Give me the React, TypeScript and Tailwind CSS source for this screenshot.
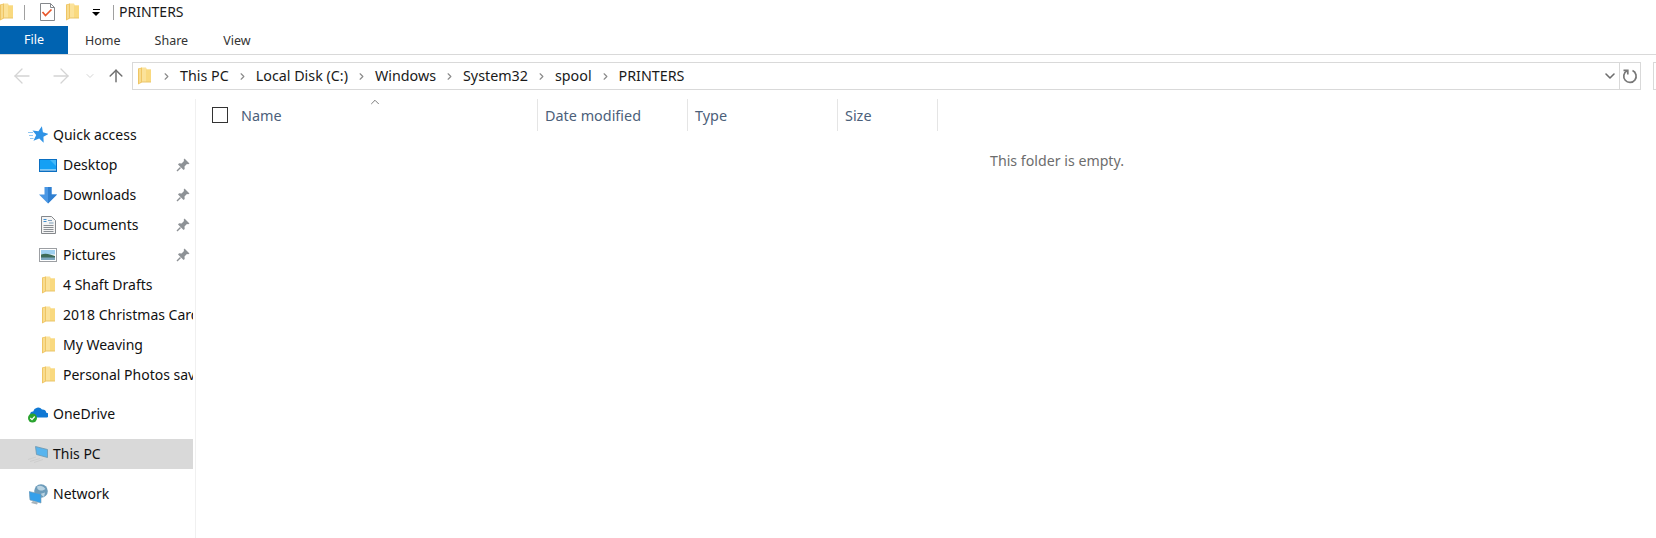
import { ArrowLeft, ArrowRight, ArrowUp, ChevronDown, ChevronRight, ChevronUp } from "lucide-react";
import type { ReactNode } from "react";

function FolderIcon({ className }: { className?: string }) {
  return (
    <svg viewBox="0 0 13 18" className={className}>
      <path d="M3 .5h5l1 2h4V15H3z" fill="#fbe29a" />
      <path d="M8 2.500h5V15H8z" fill="#f9d97f" />
      <path d="M0 1.500 4 .5V15.500L0 17.500z" fill="#efc564" />
      <path d="M1 2l2-.5V15L1 16z" fill="#f8dc8e" />
      <path d="M4 14.500h9V15.500H4z" fill="#e9c46b" />
    </svg>
  );
}

function PinIcon() {
  return (
    <svg viewBox="0 0 14 14" className="h-[14px] w-[14px] shrink-0">
      <path d="M8.500.5 13.500 5.500l-1.300.8-1.300-.3-2.400 2.400.2 2.500-1.100 1.100L2 6.400l1.100-1.100 2.500.2L8 3.100l-.3-1.300z" fill="#8e9296" />
      <path d="M4.500 9.500 1 13" stroke="#8e9296" strokeWidth="1.500" />
    </svg>
  );
}

function StarIcon() {
  return (
    <svg viewBox="0 0 20 18" className="h-[18px] w-[20px]">
      <g transform="rotate(12 12 9)">
        <path d="M12 0l2.300 5.700 6 .4-4.600 3.800 1.500 6-5.200-3.300-5.200 3.300 1.500-6-4.600-3.800 6-.4z" fill="#2f93e6" />
      </g>
      <path d="M0 6.500h5M1 9.500h4M2 12.500h3.500" stroke="#8fc6f1" strokeWidth="1" />
    </svg>
  );
}

function DesktopIcon() {
  return (
    <svg viewBox="0 0 18 13" className="h-[13px] w-[18px]">
      <rect width="18" height="13" fill="#0a6fc2" />
      <path d="M1 1h16v10H1z" fill="#14a0f4" />
      <path d="M11 1h6v6z" fill="#45b8f8" />
      <rect x="1" y="10.500" width="16" height="1" fill="#e2f3fd" />
    </svg>
  );
}

function DownloadIcon() {
  return (
    <svg viewBox="0 0 18 17" className="h-[17px] w-[18px]">
      <path d="M5.500 0h7v7.500H18L9 16.500 0 7.500h5.500z" fill="#4a97e4" />
      <path d="M9 0h3.500v7.500H18L9 16.500z" fill="#2f7fd0" />
    </svg>
  );
}

function DocumentIcon() {
  return (
    <svg viewBox="0 0 15 18" className="h-[18px] w-[15px]">
      <path d="M.5.500h10l4 4v13H.5z" fill="#f4f4f4" stroke="#85888c" />
      <path d="M2.500 3.500h3M2.500 5.500h3" stroke="#3f8fd0" />
      <path d="M7 4.500h4M8 7h4.500" stroke="#7d9fbb" />
      <path d="M2.500 9.500h10M2.500 11.500h10M2.500 13.500h10M2.500 15.500h10" stroke="#8a8f94" />
    </svg>
  );
}

function PicturesIcon() {
  return (
    <svg viewBox="0 0 18 14" className="h-[14px] w-[18px]">
      <rect x=".5" y=".5" width="17" height="13" fill="#fff" stroke="#9c9fa3" />
      <rect x="2" y="2" width="14" height="4.500" fill="#9fd0f0" />
      <path d="M2 6.500c3-1 6-1 9 0l5 1.500v2.500H2z" fill="#3e6b58" />
      <rect x="2" y="9.500" width="14" height="2.500" fill="#7da7bf" />
    </svg>
  );
}

function OneDriveIcon() {
  return (
    <svg viewBox="0 0 20 18" className="h-[18px] w-[20px]">
      <path d="M5 12.500a3 3 0 0 1 .2-6A5 5 0 0 1 14 4.500a4 4 0 0 1 4.300 3.300 2.400 2.400 0 0 1 .7 4.700z" fill="#0f78d4" />
      <circle cx="4.500" cy="13" r="4.500" fill="#2aa32f" />
      <path d="M2.300 13l1.700 1.700 2.700-3.200" stroke="#fff" strokeWidth="1.200" fill="none" />
    </svg>
  );
}

function ThisPcIcon() {
  return (
    <svg viewBox="0 0 20 17" className="h-[17px] w-[20px]">
      <path d="M7.500.5 19.500 3.500V11.500L8.500 8.500z" fill="#58b4ee" stroke="#6f97ad" strokeWidth=".8" />
      <path d="M0 13.500 8 11M2 15.500 12 12.500M6 16.500l9-3" stroke="#cacaca" strokeWidth=".8" fill="none" />
    </svg>
  );
}

function NetworkIcon() {
  return (
    <svg viewBox="0 0 19 21" className="h-[21px] w-[19px]">
      <circle cx="12" cy="7" r="6.800" fill="#6d9cba" />
      <path d="M8 2.500c3-1.500 6-.5 8.500 2.500-2 1.500-5 2.500-8 0zM11 10l5-1.500-1 4.500z" fill="#b9d3e2" />
      <path d="M0 7.500 12 10V19L1 16z" fill="#35a0ea" stroke="#7e9aac" strokeWidth=".6" />
      <path d="M4 17l5 1.500-1 2-6-1.500z" fill="#a9b4bb" />
    </svg>
  );
}

function ChecklistIcon() {
  return (
    <svg viewBox="0 0 15 18" className="h-[18px] w-[15px]">
      <path d="M.5.500h10l4 4v13H.5z" fill="#fff" stroke="#85888c" />
      <path d="M10.500.500v4h4" fill="none" stroke="#85888c" />
      <path d="M2.500 9l3 3.500 6-6" fill="none" stroke="#e8562a" strokeWidth="1.700" />
    </svg>
  );
}

function RefreshIcon() {
  return (
    <svg viewBox="0 0 16 16" className="h-[16px] w-[16px]" fill="none" stroke="#777" strokeWidth="1.700">
      <path d="M10.500 2.600a6.200 6.200 0 1 1-5.500.2" />
      <path d="M1.500 2.300h4.300v4.300" />
    </svg>
  );
}

function NavRow({
  icon,
  label,
  pinned,
  selected,
  indent,
}: {
  icon: ReactNode;
  label: string;
  pinned?: boolean;
  selected?: boolean;
  indent?: boolean;
}) {
  return (
    <div className={`flex h-[30px] w-[193px] items-center overflow-hidden whitespace-nowrap text-[14px] text-[#111] ${selected ? "bg-[#d9d9d9]" : ""}`}>
      <span className={`flex shrink-0 items-center justify-center ${indent ? "ml-[39px] mr-[6px] w-[18px]" : "ml-[28px] mr-[5px] w-[20px]"}`}>
        {icon}
      </span>
      <span className={`pb-[2px] ${pinned ? "flex-1" : ""}`}>{label}</span>
      {pinned && <span className="mr-[3px]"><PinIcon /></span>}
    </div>
  );
}

function Crumb({ label }: { label: string }) {
  return (
    <>
      <ChevronRight size={11} strokeWidth={2.500} className="mx-[8px] shrink-0 text-[#8a8a8a]" />
      <span className="text-[14.3px] text-[#1a1a1a]">{label}</span>
    </>
  );
}

function ColumnHead({ label, width }: { label: string; width: string }) {
  return (
    <div className={`flex h-[32px] items-center border-l border-[#e5e5e5] pl-[7px] pt-[2px] ${width} text-[14.4px] text-[#4c607a]`}>
      {label}
    </div>
  );
}

export default function App() {
  const sidebarFolder = <FolderIcon className="h-[18px] w-[13px]" />;

  return (
    <div className="h-[538px] w-[1656px] overflow-hidden bg-white font-['Noto_Sans',sans-serif]">
      {/* title bar */}
      <div className="mb-[2px] flex h-[24px] items-center text-[14px] text-[#1a1a1a]">
        <FolderIcon className="h-[18px] w-[13px] shrink-0" />
        <div className="ml-[11px] h-[15px] w-px bg-[#a0a0a0]" />
        <span className="ml-[15px]"><ChecklistIcon /></span>
        <FolderIcon className="ml-[11px] h-[18px] w-[13px] shrink-0" />
        <div className="ml-[12px] flex w-[10px] flex-col items-center gap-[2px]">
          <div className="h-px w-[7px] bg-black" />
          <div className="h-0 w-0 border-x-[4px] border-t-[4px] border-x-transparent border-t-black" />
        </div>
        <div className="ml-[12px] h-[15px] w-px bg-[#a0a0a0]" />
        <span className="ml-[5px] pb-[2px]">PRINTERS</span>
      </div>

      {/* ribbon tabs */}
      <div className="flex h-[29px] items-center border-b border-[#d9d9d9] text-[12.5px] text-[#333]">
        <div className="flex h-[28px] w-[68px] items-center justify-center bg-[#0063b1] text-white">File</div>
        <span className="ml-[17px] pt-[2px]">Home</span>
        <span className="ml-[34px] pt-[2px]">Share</span>
        <span className="ml-[35px] pt-[2px]">View</span>
      </div>

      {/* address bar */}
      <div className="mt-[7px] flex h-[28px] items-center">
        <ArrowLeft size={24} strokeWidth={1.300} className="ml-[10px] shrink-0 text-[#d4d4d4]" />
        <ArrowRight size={24} strokeWidth={1.300} className="ml-[15px] shrink-0 text-[#d4d4d4]" />
        <ChevronDown size={12} strokeWidth={2} className="ml-[11px] shrink-0 text-[#d4d4d4]" />
        <ArrowUp size={20} strokeWidth={1.800} className="ml-[10px] shrink-0 text-[#707070]" />
        <div className="ml-[6px] flex h-[28px] w-[1509px] shrink-0 items-center border border-[#d9d9d9]">
          <FolderIcon className="ml-[5px] mr-[2px] h-[18px] w-[13px] shrink-0" />
          <Crumb label="This PC" />
          <Crumb label="Local Disk (C:)" />
          <Crumb label="Windows" />
          <Crumb label="System32" />
          <Crumb label="spool" />
          <Crumb label="PRINTERS" />
          <ChevronDown size={16} strokeWidth={2.400} className="ml-auto mr-[1px] text-[#6d6d6d]" />
          <div className="flex h-full w-[21px] items-center justify-center border-l border-[#d9d9d9]">
            <RefreshIcon />
          </div>
        </div>
        <div className="ml-[12px] h-[28px] w-[10px] shrink-0 border border-[#d9d9d9]" />
      </div>

      <div className="mt-[9px] flex h-[440px]">
        {/* navigation pane */}
        <aside className="w-[196px] shrink-0 border-r border-[#f0f0f0] pt-[21px]">
          <NavRow icon={<StarIcon />} label="Quick access" />
          <NavRow indent icon={<DesktopIcon />} label="Desktop" pinned />
          <NavRow indent icon={<DownloadIcon />} label="Downloads" pinned />
          <NavRow indent icon={<DocumentIcon />} label="Documents" pinned />
          <NavRow indent icon={<PicturesIcon />} label="Pictures" pinned />
          <NavRow indent icon={sidebarFolder} label="4 Shaft Drafts" />
          <NavRow indent icon={sidebarFolder} label="2018 Christmas Cards" />
          <NavRow indent icon={sidebarFolder} label="My Weaving" />
          <NavRow indent icon={sidebarFolder} label="Personal Photos saved" />
          <div className="mt-[9px] flex flex-col gap-[10px]">
            <NavRow icon={<OneDriveIcon />} label="OneDrive" />
            <NavRow icon={<ThisPcIcon />} label="This PC" selected />
            <NavRow icon={<NetworkIcon />} label="Network" />
          </div>
        </aside>

        {/* file list */}
        <main className="flex-1">
          <div className="flex h-[32px] items-center">
            <div className="relative flex h-[32px] w-[341px] items-center pl-[16px] text-[14.4px] text-[#4c607a]">
              <div className="h-[16px] w-[16px] border border-[#333]" />
              <span className="ml-[13px] pt-[2px]">Name</span>
              <ChevronUp size={14} strokeWidth={1.300} className="absolute left-[172px] top-[-4px] text-[#555]" />
            </div>
            <ColumnHead label="Date modified" width="w-[150px]" />
            <ColumnHead label="Type" width="w-[150px]" />
            <ColumnHead label="Size" width="w-[100px]" />
            <div className="h-[32px] border-l border-[#e5e5e5]" />
          </div>
          <div className="flex justify-center pl-[262px] pt-[19px] text-[14.2px] text-[#6d6d6d]">
            This folder is empty.
          </div>
        </main>
      </div>
    </div>
  );
}
